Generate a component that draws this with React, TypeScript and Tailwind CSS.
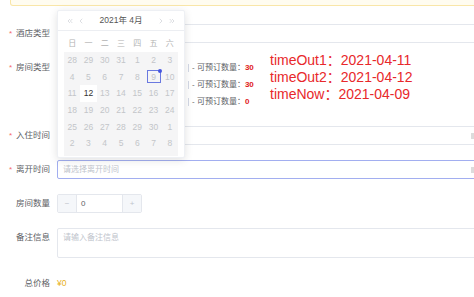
import { ChevronLeft, ChevronRight, ChevronsLeft, ChevronsRight } from "lucide-react";

const font = { fontFamily: '"Liberation Sans", "Noto Sans CJK SC", sans-serif' };

const weekDays = ["日", "一", "二", "三", "四", "五", "六"];
const days = [
  28, 29, 30, 31, 1, 2, 3,
  4, 5, 6, 7, 8, 9, 10,
  11, 12, 13, 14, 15, 16, 17,
  18, 19, 20, 21, 22, 23, 24,
  25, 26, 27, 28, 29, 30, 1,
  2, 3, 4, 5, 6, 7, 8,
];

function Label({ text, required }: { text: string; required?: boolean }) {
  return (
    <div className="w-[50px] shrink-0 flex items-center justify-end h-[17px] text-[8.5px] text-[#606266] relative">
      {required && <span className="absolute left-[9px] text-[#f56c6c] text-[8px]">*</span>}
      <span>{text}</span>
    </div>
  );
}

function DatePopup() {
  return (
    <div className="absolute left-[57px] top-[10px] w-[128px] h-[148px] bg-white border border-[#eef0f4] shadow-[0_2px_8px_rgba(0,0,0,0.12)] rounded-[2px]">
      <div className="h-[20px] border-b border-[#eceef2] flex items-center px-[8px] text-[#b8bcc4]">
        <ChevronsLeft size={8} strokeWidth={1.5} />
        <ChevronLeft size={8} strokeWidth={1.5} className="ml-[3px]" />
        <span className="flex-1 text-center text-[8.5px] text-[#555]">2021年 4月</span>
        <ChevronRight size={8} strokeWidth={1.5} className="mr-[3px]" />
        <ChevronsRight size={8} strokeWidth={1.5} />
      </div>
      <div className="pt-[4px] px-[6px]">
        <div className="grid grid-cols-7 h-[17px] items-center text-center text-[8px] text-[#b3b3b3]">
          {weekDays.map((d) => (
            <span key={d}>{d}</span>
          ))}
        </div>
        <div className="bg-[#f5f5f6] pb-[4px]">
          <div className="grid grid-cols-7 grid-rows-6 h-[100px] text-center text-[8.5px] text-[#c3c5c9]">
            {days.map((d, i) => {
              if (i === 15) {
                return (
                  <div key={i} className="bg-white text-[#333] flex items-center justify-center">
                    {d}
                  </div>
                );
              }
              if (i === 12) {
                return (
                  <div key={i} className="flex items-center justify-center">
                    <div className="relative w-[14px] h-[13px] border border-[#6a79e0] flex items-center justify-center">
                      {d}
                      <span className="absolute -top-[2.5px] -right-[2.5px] w-[4px] h-[4px] rounded-full bg-[#4556e0]" />
                    </div>
                  </div>
                );
              }
              return (
                <div key={i} className="flex items-center justify-center">
                  {d}
                </div>
              );
            })}
          </div>
        </div>
      </div>
    </div>
  );
}

export default function App() {
  return (
    <div className="relative w-[474px] h-[297px] overflow-hidden bg-white" style={font}>
      <div className="w-[500px]">
        <div className="ml-[10px] h-[6px] bg-[#fffcf0] border border-t-0 border-[#f9e6a8] rounded-bl-[3px]" />

        <div className="flex items-center gap-[7px] mt-[18px]">
          <Label text="酒店类型" required />
          <div className="flex-1 h-[19px] border border-[#e4e7ed] rounded-[2px]" />
        </div>

        <div className="flex items-start mt-[9px]">
          <div className="pt-[7px] mr-[7px]">
            <Label text="房间类型" required />
          </div>
          <div className="pt-[7px] w-[205px] shrink-0">
            {["30", "30", "0"].map((n, i) => (
              <div key={i} className="flex items-center h-[17px] text-[8px] text-[#606266]">
                <div className="w-[131px] shrink-0" />
                <span className="w-px h-[8px] bg-[#d3d9e6]" />
                <span className="ml-[3px]">- 可预订数量：</span>
                <span className="text-[#e02020] font-bold">{n}</span>
              </div>
            ))}
          </div>
          <div className="ml-[8px] text-[14px] leading-[17px] text-[#e8282b]">
            <div>timeOut1：2021-04-11</div>
            <div>timeOut2：2021-04-12</div>
            <div>timeNow：2021-04-09</div>
          </div>
        </div>

        <div className="flex items-center gap-[7px] mt-[16px]">
          <Label text="入住时间" required />
          <div className="flex-1 h-[19px] border border-[#e4e7ed] rounded-[2px] flex items-center justify-end pr-[23px]">
            <span className="w-[5px] h-[6px] bg-[#dcdcdc]" />
          </div>
        </div>

        <div className="flex items-center gap-[7px] mt-[15px]">
          <Label text="离开时间" required />
          <div className="flex-1 h-[19px] border border-[#a2aef0] rounded-[2px] flex items-center pl-[5px] pr-[23px] text-[8px] text-[#c0c4cc]">
            <span className="flex-1">请选择离开时间</span>
            <span className="w-[5px] h-[6px] bg-[#dcdcdc]" />
          </div>
        </div>

        <div className="flex items-center gap-[7px] mt-[15px]">
          <Label text="房间数量" />
          <div className="w-[85px] h-[19px] border border-[#e4e7ed] rounded-[2px] flex text-[8px]">
            <div className="w-[19px] bg-[#f5f7fa] border-r border-[#e4e7ed] flex items-center justify-center text-[#c0c4cc]">−</div>
            <div className="flex-1 flex items-center pl-[4px] text-[#606266]">0</div>
            <div className="w-[19px] bg-[#f5f7fa] border-l border-[#e4e7ed] flex items-center justify-center text-[#c0c4cc]">+</div>
          </div>
        </div>

        <div className="flex items-start gap-[7px] mt-[15px]">
          <div className="mt-[1px]">
            <Label text="备注信息" />
          </div>
          <div className="flex-1 h-[30px] border border-[#e4e7ed] rounded-[2px] pl-[5px] pt-[3px] text-[8px] text-[#c0c4cc]">
            请输入备注信息
          </div>
        </div>

        <div className="flex items-center gap-[7px] mt-[17px]">
          <Label text="总价格" />
          <span className="text-[8.5px] text-[#e8b020]">¥0</span>
        </div>
      </div>

      <DatePopup />
    </div>
  );
}
